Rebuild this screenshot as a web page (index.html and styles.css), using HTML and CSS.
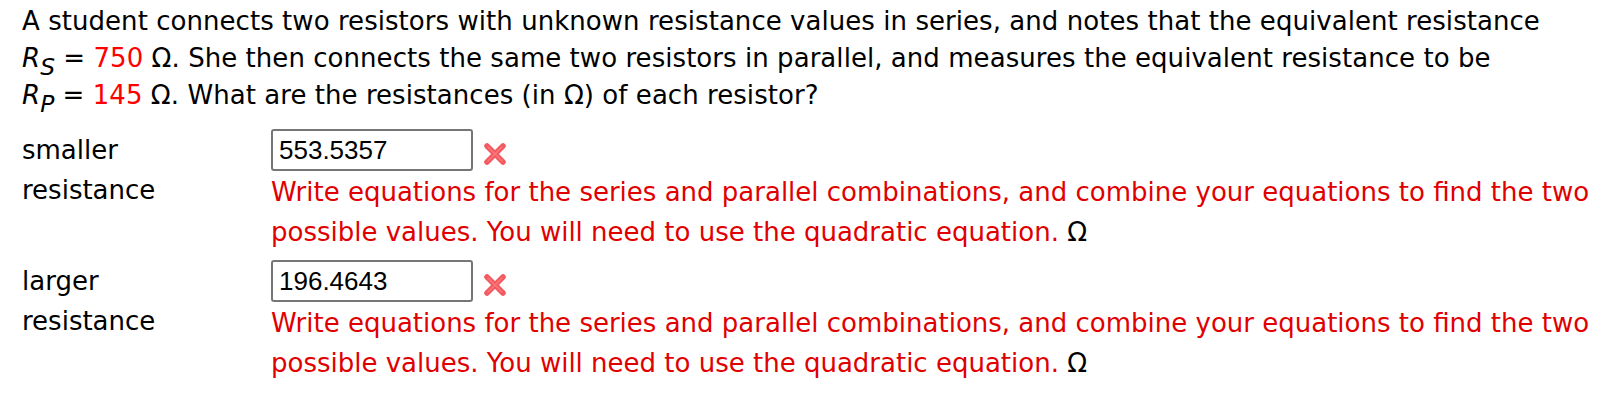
FILE: index.html
```html
<!DOCTYPE html>
<html>
<head>
<meta charset="utf-8">
<link rel="stylesheet" href="styles.css">
</head>
<body>
<div class="question">
  <p class="prompt">A student connects two resistors with unknown resistance values in series, and notes that the equivalent resistance <span class="math"><span class="var">R<sub>S</sub></span> = <span class="given">750</span> &Omega;.</span> She then connects the same two resistors in parallel, and measures the equivalent resistance to be <span class="math"><span class="var">R<sub>P</sub></span> = <span class="given">145</span> &Omega;.</span> What are the resistances (in &Omega;) of each resistor?</p>
  <div class="answers">
    <div class="label">smaller<br>resistance</div>
    <div class="answer">
      <div class="entry">
        <input class="field" type="text" value="553.5357">
        <svg class="wrong" viewBox="0 0 24 24" width="24" height="24"><path d="M4 4 L20 20 M20 4 L4 20" stroke="#f25a5f" stroke-width="5.5" stroke-linecap="round"/><path d="M5 5 L19 19 M19 5 L5 19" stroke="#ff8a8e" stroke-width="1.5" stroke-linecap="round" opacity="0.6"/></svg>
      </div>
      <div class="feedback">Write equations for the series and parallel combinations, and combine your equations to find the two possible values. You will need to use the quadratic equation. <span class="unit">&Omega;</span></div>
    </div>
    <div class="label">larger<br>resistance</div>
    <div class="answer">
      <div class="entry">
        <input class="field" type="text" value="196.4643">
        <svg class="wrong" viewBox="0 0 24 24" width="24" height="24"><path d="M4 4 L20 20 M20 4 L4 20" stroke="#f25a5f" stroke-width="5.5" stroke-linecap="round"/><path d="M5 5 L19 19 M19 5 L5 19" stroke="#ff8a8e" stroke-width="1.5" stroke-linecap="round" opacity="0.6"/></svg>
      </div>
      <div class="feedback">Write equations for the series and parallel combinations, and combine your equations to find the two possible values. You will need to use the quadratic equation. <span class="unit">&Omega;</span></div>
    </div>
  </div>
</div>
</body>
</html>
```
FILE: styles.css
```css
html, body {
  margin: 0;
  padding: 0;
  background: #fff;
}
body {
  padding: 3px 22px 0 22px;
  font-family: "DejaVu Sans", Verdana, sans-serif;
  font-size: 26px;
  color: #000;
}
.prompt {
  margin: 0;
  line-height: 37px;
  max-width: 1560px;
  letter-spacing: 0.05px;
}
.math {
  white-space: nowrap;
}
.var {
  font-style: italic;
}
.var sub {
  font-size: 0.9em;
  vertical-align: -0.35em;
  line-height: 0;
}
.given {
  color: #ff0000;
}
.answers {
  display: grid;
  grid-template-columns: 249px 1fr;
  margin-top: 14px;
  row-gap: 7px;
}
.label {
  line-height: 40px;
  padding-top: 2px;
}
.entry {
  display: flex;
  align-items: center;
  gap: 10px;
  height: 44px;
}
.field {
  box-sizing: border-box;
  width: 202px;
  height: 42px;
  border: 2px solid #767676;
  border-radius: 3px;
  padding: 0 6px;
  font-family: "Liberation Sans", Arial, sans-serif;
  font-size: 26px;
  color: #000;
  margin: 0;
}
.wrong {
  display: block;
  margin-top: 8px;
}
.feedback {
  color: #e00000;
  line-height: 40px;
}
.unit {
  color: #000;
}
```
